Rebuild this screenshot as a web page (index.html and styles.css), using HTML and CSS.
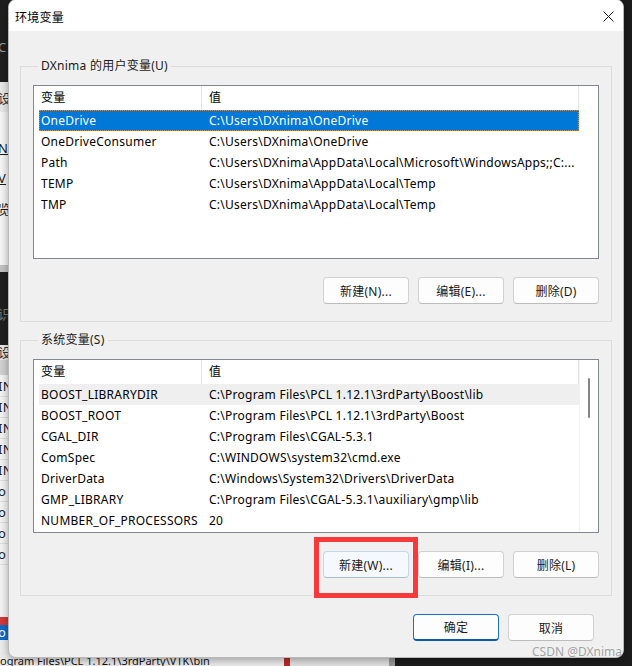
FILE: index.html
```html
<!DOCTYPE html>
<html lang="zh-CN">
<head>
  <meta charset="UTF-8" />
  <title>环境变量</title>
  <link rel="stylesheet" href="styles.css">
</head>
<body>

  <!-- windows behind the dialog -->
  <div class="bg-left">
    <div class="bl-dark"><span>C</span></div>
    <div class="bl-tab"><span>设</span></div>
    <div class="bl-links">
      <span class="ul">N</span>
      <span class="ul">V</span>
      <span>览</span>
    </div>
    <div class="bl-bar"></div>
    <div class="bl-dark bl-dark2"><span>识</span></div>
    <div class="bl-tab bl-tab2"><span>设</span></div>
    <div class="bl-bar bl-bar2"></div>
    <div class="bl-rows">
      <span>IN</span><span>IN</span><span>IN</span><span>IN</span><span>IN</span>
      <span>o</span><span>o</span><span>o</span><span>o</span>
    </div>
    <div class="bl-red"></div>
    <div class="bl-blue"><span>o</span></div>
    <div class="bl-rest"></div>
  </div>

  <div class="bg-bottom">
    <div class="bb-text">ogram Files\PCL 1.12.1\3rdParty\VTK\bin</div>
    <div class="bb-red"></div>
    <div class="bb-gray"></div>
    <div class="bb-edge"></div>
  </div>

  <div class="dialog">
    <div class="titlebar">
      <span class="title">环境变量</span>
      <svg class="close" width="11" height="11" viewBox="0 0 11 11">
        <path d="M0.5 0.5 L10.5 10.5 M10.5 0.5 L0.5 10.5" stroke="#1a1a1a" stroke-width="1" fill="none"/>
      </svg>
    </div>

    <div class="dlg-body">
      <fieldset class="group">
        <legend>DXnima 的用户变量(U)</legend>
        <div class="list">
          <div class="list-main">
            <div class="list-head">
              <div class="col-name">变量</div>
              <div class="col-val">值</div>
            </div>
            <div class="row selected"><div class="col-name">OneDrive</div><div class="col-val">C:\Users\DXnima\OneDrive</div></div>
            <div class="row"><div class="col-name">OneDriveConsumer</div><div class="col-val">C:\Users\DXnima\OneDrive</div></div>
            <div class="row"><div class="col-name">Path</div><div class="col-val">C:\Users\DXnima\AppData\Local\Microsoft\WindowsApps;;C:...</div></div>
            <div class="row"><div class="col-name">TEMP</div><div class="col-val">C:\Users\DXnima\AppData\Local\Temp</div></div>
            <div class="row"><div class="col-name">TMP</div><div class="col-val">C:\Users\DXnima\AppData\Local\Temp</div></div>
          </div>
          <div class="scroll-area"></div>
        </div>
        <div class="btn-row">
          <button>新建(N)...</button>
          <button>编辑(E)...</button>
          <button>删除(D)</button>
        </div>
      </fieldset>

      <fieldset class="group group-sys">
        <legend>系统变量(S)</legend>
        <div class="list">
          <div class="list-main">
            <div class="list-head">
              <div class="col-name">变量</div>
              <div class="col-val">值</div>
            </div>
            <div class="row hover"><div class="col-name">BOOST_LIBRARYDIR</div><div class="col-val">C:\Program Files\PCL 1.12.1\3rdParty\Boost\lib</div></div>
            <div class="row"><div class="col-name">BOOST_ROOT</div><div class="col-val">C:\Program Files\PCL 1.12.1\3rdParty\Boost</div></div>
            <div class="row"><div class="col-name">CGAL_DIR</div><div class="col-val">C:\Program Files\CGAL-5.3.1</div></div>
            <div class="row"><div class="col-name">ComSpec</div><div class="col-val">C:\WINDOWS\system32\cmd.exe</div></div>
            <div class="row"><div class="col-name">DriverData</div><div class="col-val">C:\Windows\System32\Drivers\DriverData</div></div>
            <div class="row"><div class="col-name">GMP_LIBRARY</div><div class="col-val">C:\Program Files\CGAL-5.3.1\auxiliary\gmp\lib</div></div>
            <div class="row"><div class="col-name">NUMBER_OF_PROCESSORS</div><div class="col-val">20</div></div>
          </div>
          <div class="scroll-area scrollbar"><div class="thumb"></div></div>
        </div>
        <div class="btn-row">
          <div class="marked">
            <button class="btn-hot">新建(W)...</button>
            <div class="red-box"></div>
          </div>
          <button>编辑(I)...</button>
          <button>删除(L)</button>
        </div>
      </fieldset>

      <div class="footer">
        <button class="btn-default">确定</button>
        <button>取消</button>
      </div>
    </div>
  </div>

  <div class="watermark">CSDN @DXnima</div>

</body>
</html>
```

FILE: styles.css
```css
/* Baseline */
* {
  margin: 0;
  padding: 0;
  box-sizing: border-box;
}
body {
  width: 632px;
  height: 666px;
  background: #1c1c1c;
  overflow: hidden;
  position: relative;
  font-family: "Noto Sans", "Noto Sans CJK SC", sans-serif;
  font-size: 12px;
  letter-spacing: 0.25px;
  color: #000;
}

/* Background windows - just slivers are visible */
.bg-left {
  position: absolute;
  left: 0;
  top: 0;
  width: 14px;
  height: 666px;
  display: flex;
  flex-direction: column;
  overflow: hidden;
  font-size: 13px;
}
.bg-left span {
  display: block;
  margin-left: -2px;
}
.bl-dark {
  height: 82px;
  background: #1f1f1f;
  color: #9a9a9a;
  padding-top: 38px;
}
.bl-tab {
  height: 30px;
  background: #e9e9e9;
  padding-top: 6px;
  color: #333;
}
.bl-links {
  height: 153px;
  background: #f6f6f6;
  color: #1a1a1a;
  display: flex;
  flex-direction: column;
  gap: 12px;
  padding-top: 27px;
}
.bl-links .ul {
  text-decoration: underline;
}
.bl-bar {
  height: 7px;
  background: #c3c3c3;
}
.bl-dark2 {
  height: 73px;
  padding-top: 32px;
  color: #7a7a7a;
}
.bl-tab2 {
  height: 15px;
  padding-top: 0;
  line-height: 15px;
}
.bl-bar2 {
  height: 15px;
  background: #d2d2d2;
}
.bl-rows {
  height: 242px;
  background: #f4f4f4;
  display: flex;
  flex-direction: column;
  padding-top: 1px;
}
.bl-rows span {
  height: 21px;
  line-height: 21px;
  border-bottom: 1px solid #dedede;
  color: #222;
}
.bl-red {
  height: 8px;
  background: #d53a3a;
}
.bl-blue {
  height: 15px;
  background: #0a6cc9;
  color: #fff;
  line-height: 14px;
}
.bl-rest {
  flex: 1;
  background: #eeeeee;
}

.bg-bottom {
  position: absolute;
  left: 0;
  top: 652px;
  width: 632px;
  height: 14px;
  display: flex;
}
.bb-text {
  width: 284px;
  background: #ececec;
  color: #111;
  line-height: 16px;
  padding-top: 1px;
  white-space: nowrap;
  overflow: hidden;
  font-size: 11px;
  letter-spacing: 0;
}
.bb-red {
  width: 6px;
  background: #b92a2a;
}
.bb-gray {
  width: 99px;
  background: #e1e1e1;
}
.bb-edge {
  width: 6px;
  background: #9a9a9a;
}

/* Dialog window */
.dialog {
  position: absolute;
  left: 8px;
  top: -1px;
  width: 616px;
  height: 659px;
  background: #f0f0f0;
  border: 1px solid #b9b9b9;
  border-radius: 8px;
  box-shadow: 0 2px 8px rgba(0,0,0,0.35);
  overflow: hidden;
  z-index: 2;
}
.titlebar {
  height: 31px;
  background: #fff;
  display: flex;
  align-items: center;
  justify-content: space-between;
  padding: 2px 9px 0 6px;
}
.close {
  display: block;
}

.dlg-body {
  padding: 27px 11px 0 11px;
}

/* Group boxes */
.group {
  border: 1px solid #dcdcdc;
  padding: 11px 12px 17px 12px;
  min-width: 0;
}
.group legend {
  margin-left: 5px;
  padding: 0 3px;
  line-height: 16px;
  color: #1a1a1a;
}
.group-sys {
  margin-top: 10px;
}

/* List view */
.list {
  height: 174px;
  background: #fff;
  border: 1px solid #828790;
  display: flex;
  overflow: hidden;
}
.list-main {
  flex: 1;
  padding-left: 5px;
}
.list-head,
.row {
  display: flex;
  white-space: nowrap;
}
.list-head {
  height: 24px;
  align-items: center;
}
.list-head .col-name,
.list-head .col-val {
  height: 24px;
  line-height: 24px;
  border-right: 1px solid #e5e5e5;
}
.col-name {
  width: 163px;
  padding-left: 2px;
  flex-shrink: 0;
}
.col-val {
  flex: 1;
  padding-left: 7px;
  overflow: hidden;
}
.row {
  height: 21px;
  line-height: 21px;
}
.row.selected {
  background: #0078d7;
  color: #fff;
  outline: 1px dotted #e08a2a;
  outline-offset: -1px;
}
.row.hover {
  background: #efefef;
}

.scroll-area {
  width: 19px;
  flex-shrink: 0;
}
.scrollbar {
  border-left: 1px solid #f2f2f2;
  padding-top: 18px;
  display: flex;
  justify-content: center;
}
.thumb {
  width: 2px;
  height: 40px;
  background: #858585;
  border-radius: 1px;
}

/* Buttons */
.btn-row,
.footer {
  display: flex;
  justify-content: flex-end;
  gap: 9px;
}
.btn-row {
  margin-top: 18px;
}
.footer {
  margin-top: 18px;
  padding-right: 18px;
}
button {
  width: 86px;
  height: 27px;
  background: #fdfdfd;
  border: 1px solid #d1d1d1;
  border-bottom-color: #bcbcbc;
  border-radius: 4px;
  font-family: inherit;
  font-size: 12px;
  letter-spacing: 0.25px;
  color: #1a1a1a;
}
.btn-hot {
  background: #f5f9fd;
  border-color: #c6d7ea;
  border-bottom-color: #a9c0d9;
}
.btn-default {
  border: 1px solid #1c6fc7;
  border-bottom: 2px solid #0a58b0;
}

/* Red annotation around the new button */
.marked {
  position: relative;
}
.red-box {
  position: absolute;
  left: -9px;
  top: -14px;
  width: 104px;
  height: 61px;
  border: 5px solid #f93a3a;
}

.watermark {
  position: absolute;
  right: 10px;
  top: 643px;
  color: #a2a2a2;
  font-size: 12px;
  letter-spacing: 0;
  text-shadow: 0 0 2px rgba(255,255,255,0.8);
  z-index: 3;
}
```
